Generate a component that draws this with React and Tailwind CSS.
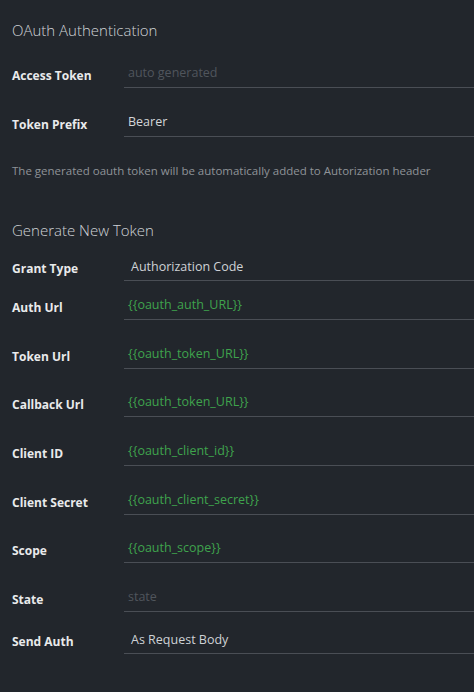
import React from "react";

const font = { fontFamily: '"Open Sans", "Noto Sans", sans-serif' };

function Row({ label, value, kind = "text", mt }) {
  let valueEl;
  if (kind === "placeholder") {
    valueEl = <span className="pl-1 pt-[3px] text-[12.5px] text-[#50555c]">{value}</span>;
  } else if (kind === "var") {
    valueEl = <span className="pl-1 pt-[3px] text-[12.5px] text-[#3fa34c]">{value}</span>;
  } else if (kind === "select") {
    valueEl = <span className="pl-[7px] pt-[5px] text-[12.5px] text-[#cfd2d6]">{value}</span>;
  } else {
    valueEl = <span className="pl-1 pt-[3px] text-[12.5px] text-[#d4d6d9]">{value}</span>;
  }
  return (
    <div className={`flex items-end ${mt}`}>
      <div className="w-[124px] shrink-0 pl-3 pb-[4px] text-[12px] font-bold leading-4 text-[#e9eaeb]">
        {label}
      </div>
      <div className="flex h-[31px] flex-1 items-center border-b border-[#4a4e55]">
        {valueEl}
      </div>
    </div>
  );
}

export default function App() {
  return (
    <div className="h-[692px] w-[474px] overflow-hidden bg-[#22262c]" style={font}>
      <div className="pt-5">
        <div className="pl-3 text-[15px] font-light leading-5 text-[#d0d3d7]">OAuth Authentication</div>
        <Row label="Access Token" value="auto generated" kind="placeholder" mt="mt-[17px]" />
        <Row label="Token Prefix" value="Bearer" mt="mt-[18px]" />
        <div className="mt-[26px] pl-3 text-[11.5px] leading-4 text-[#8f9398]">
          The generated oauth token will be automatically added to Autorization header
        </div>
        <div className="mt-[41px] pl-3 text-[15px] font-light leading-5 text-[#d0d3d7]">Generate New Token</div>
        <Row label="Grant Type" value="Authorization Code" kind="select" mt="mt-[10px]" />
        <Row label="Auth Url" value="{{oauth_auth_URL}}" kind="var" mt="mt-[8px]" />
        <Row label="Token Url" value="{{oauth_token_URL}}" kind="var" mt="mt-[18px]" />
        <Row label="Callback Url" value="{{oauth_token_URL}}" kind="var" mt="mt-[17px]" />
        <Row label="Client ID" value="{{oauth_client_id}}" kind="var" mt="mt-[18px]" />
        <Row label="Client Secret" value="{{oauth_client_secret}}" kind="var" mt="mt-[18px]" />
        <Row label="Scope" value="{{oauth_scope}}" kind="var" mt="mt-[17px]" />
        <Row label="State" value="state" kind="placeholder" mt="mt-[18px]" />
        <Row label="Send Auth" value="As Request Body" kind="select" mt="mt-[11px]" />
      </div>
    </div>
  );
}
